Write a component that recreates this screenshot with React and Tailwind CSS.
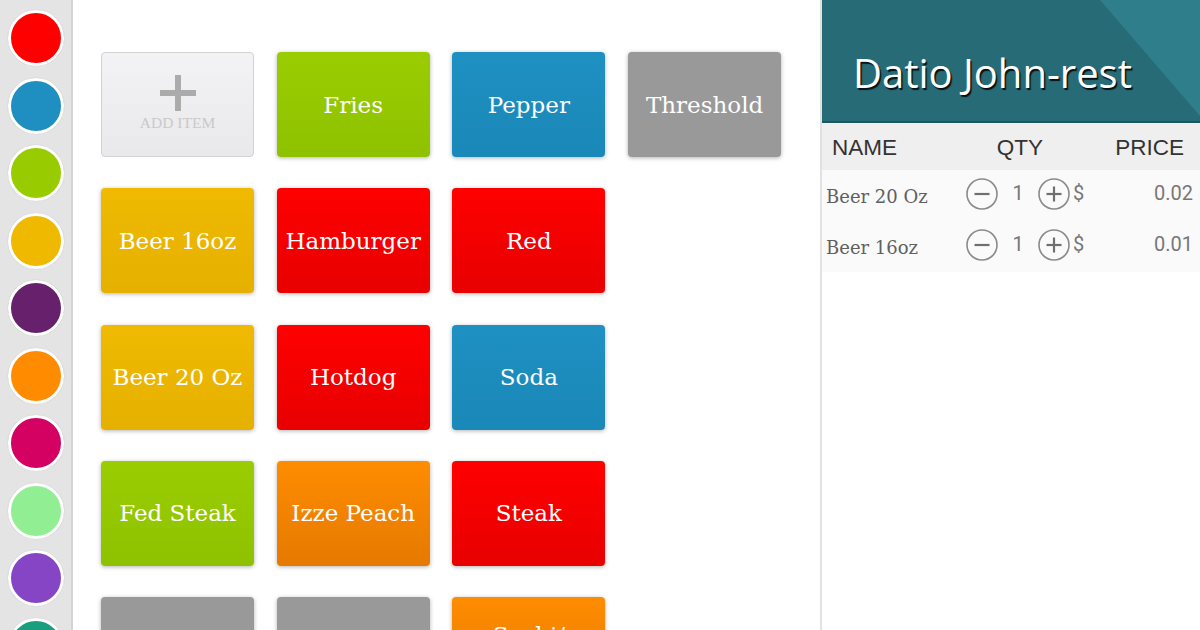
import React from "react";

const circles = [
  "bg-[#ff0000]",
  "bg-[#1e8fc0]",
  "bg-[#99cc00]",
  "bg-[#efb900]",
  "bg-[#66206c]",
  "bg-[#ff8c00]",
  "bg-[#d40062]",
  "bg-[#92ee92]",
  "bg-[#8545c4]",
  "bg-[#1a9e80]",
];

const tiles = [
  { t: "Fries", c: "bg-gradient-to-b from-[#9acd00] to-[#8ec200]" },
  { t: "Pepper", c: "bg-gradient-to-b from-[#1e90c2] to-[#1a88b8]" },
  { t: "Threshold", c: "bg-[#999999]" },
  { t: "Beer 16oz", c: "bg-gradient-to-b from-[#efba00] to-[#e6b000]" },
  { t: "Hamburger", c: "bg-gradient-to-b from-[#ff0000] to-[#e80000]" },
  { t: "Red", c: "bg-gradient-to-b from-[#ff0000] to-[#e80000]" },
  { t: null },
  { t: "Beer 20 Oz", c: "bg-gradient-to-b from-[#efba00] to-[#e6b000]" },
  { t: "Hotdog", c: "bg-gradient-to-b from-[#ff0000] to-[#e80000]" },
  { t: "Soda", c: "bg-gradient-to-b from-[#1e90c2] to-[#1a88b8]" },
  { t: null },
  { t: "Fed Steak", c: "bg-gradient-to-b from-[#9acd00] to-[#8ec200]" },
  { t: "Izze Peach", c: "bg-gradient-to-b from-[#ff8c00] to-[#e67a00]" },
  { t: "Steak", c: "bg-gradient-to-b from-[#ff0000] to-[#e80000]" },
  { t: null },
  { t: "", c: "bg-[#999999]" },
  { t: "", c: "bg-[#999999]" },
  { t: ["Sushi/", "Roll"], c: "bg-gradient-to-b from-[#ff8c00] to-[#e67a00]" },
];

function CircleIcon({ plus }) {
  return (
    <svg width="32" height="32" viewBox="0 0 32 32" className="shrink-0">
      <circle cx="16" cy="16" r="15" fill="none" stroke="#8a8a8a" strokeWidth="1.6" />
      <line x1="8.5" y1="16" x2="23.5" y2="16" stroke="#6f6f6f" strokeWidth="2.2" />
      {plus && <line x1="16" y1="8.5" x2="16" y2="23.5" stroke="#6f6f6f" strokeWidth="2.2" />}
    </svg>
  );
}

function Row({ name, price }) {
  return (
    <div className="flex h-[51px] items-start">
      <div className="w-[144px] pl-[4px] pt-[15px] text-[18px] leading-[24px] text-[#606060] [font-family:'DejaVu_Serif',serif]">
        {name}
      </div>
      <div className="mt-[8px]">
        <CircleIcon />
      </div>
      <div className="w-[40px] pt-[11px] text-center text-[20px] leading-[24px] text-[#777] [font-family:Roboto,sans-serif]">
        1
      </div>
      <div className="mt-[8px]">
        <CircleIcon plus />
      </div>
      <div className="pt-[11px] pl-[3px] text-[20px] leading-[24px] text-[#777] [font-family:Roboto,sans-serif]">
        $
      </div>
      <div className="flex-1 pt-[11px] pr-[7px] text-right text-[20px] leading-[24px] text-[#777] [font-family:Roboto,sans-serif]">
        {price}
      </div>
    </div>
  );
}

export default function App() {
  return (
    <div className="flex h-[630px] w-[1200px] overflow-hidden bg-white">
      {/* sidebar */}
      <div className="flex h-full w-[73px] shrink-0 flex-col items-center gap-[11.5px] border-r-2 border-[#d4d4d4] bg-[#e4e4e4] pt-[10px] pl-[1px]">
        {circles.map((c, i) => (
          <div
            key={i}
            className={`h-[56px] w-[56px] shrink-0 rounded-full border-[3.5px] border-white ${c} shadow-[0_0_1px_rgba(0,0,0,0.25)]`}
          />
        ))}
      </div>

      {/* main grid */}
      <div className="w-[747px] shrink-0 pl-[28px] pt-[52px]">
        <div className="grid grid-cols-[repeat(4,153px)] auto-rows-[105px] gap-x-[22.7px] gap-y-[31.3px]">
          <div className="flex flex-col items-center justify-center rounded-[4px] border border-[#d2d2d2] bg-gradient-to-b from-[#f3f3f5] to-[#e9e9eb]">
            <div className="relative mt-[-4px] h-[36px] w-[36px]">
              <div className="absolute left-0 top-[15px] h-[6px] w-[36px] bg-[#ababab]" />
              <div className="absolute left-[15px] top-0 h-[36px] w-[6px] bg-[#ababab]" />
            </div>
            <div className="mt-[4px] text-[15.5px] leading-[16px] text-[#c9c9c9] [font-family:'Liberation_Serif',serif]">
              ADD ITEM
            </div>
          </div>
          {tiles.map((t, i) =>
            t.t === null ? (
              <div key={i} />
            ) : (
              <div
                key={i}
                className={`flex flex-col items-center justify-center rounded-[4px] px-[4px] text-center text-[23px] leading-[30px] text-white shadow-[0_1px_4px_rgba(0,0,0,0.3)] [font-family:'DejaVu_Serif',serif] ${t.c}`}
              >
                {Array.isArray(t.t) ? t.t.map((l, j) => <div key={j}>{l}</div>) : t.t}
              </div>
            )
          )}
        </div>
      </div>

      {/* right panel */}
      <div className="flex h-full flex-1 flex-col border-l-2 border-[#e2e2e2] bg-white">
        <div className="relative h-[123px] shrink-0 overflow-hidden border-b-2 border-[#1d5862] bg-[#276b77]">
          <svg className="absolute right-0 top-0" width="100" height="121" viewBox="0 0 100 121">
            <polygon points="0,0 100,0 100,116" fill="#2e7e8b" />
          </svg>
          <div className="relative pl-[31px] pt-[46px] text-[40px] leading-[54px] text-white [font-family:'Open_Sans',sans-serif] [text-shadow:1.5px_1.5px_1px_rgba(0,0,0,0.85)]">
            Datio John-rest
          </div>
        </div>
        <div className="flex h-[47px] shrink-0 items-center bg-[#efefef] pt-[2px] text-[22.5px] text-[#333] [font-family:'Liberation_Sans',Arial,sans-serif]">
          <div className="w-[148px] pl-[10px]">NAME</div>
          <div className="w-[100px] text-center">QTY</div>
          <div className="flex-1 pr-[16px] text-right">PRICE</div>
        </div>
        <div className="shrink-0 bg-[#fafafa]">
          <Row name="Beer 20 Oz" price="0.02" />
          <Row name="Beer 16oz" price="0.01" />
        </div>
      </div>
    </div>
  );
}
